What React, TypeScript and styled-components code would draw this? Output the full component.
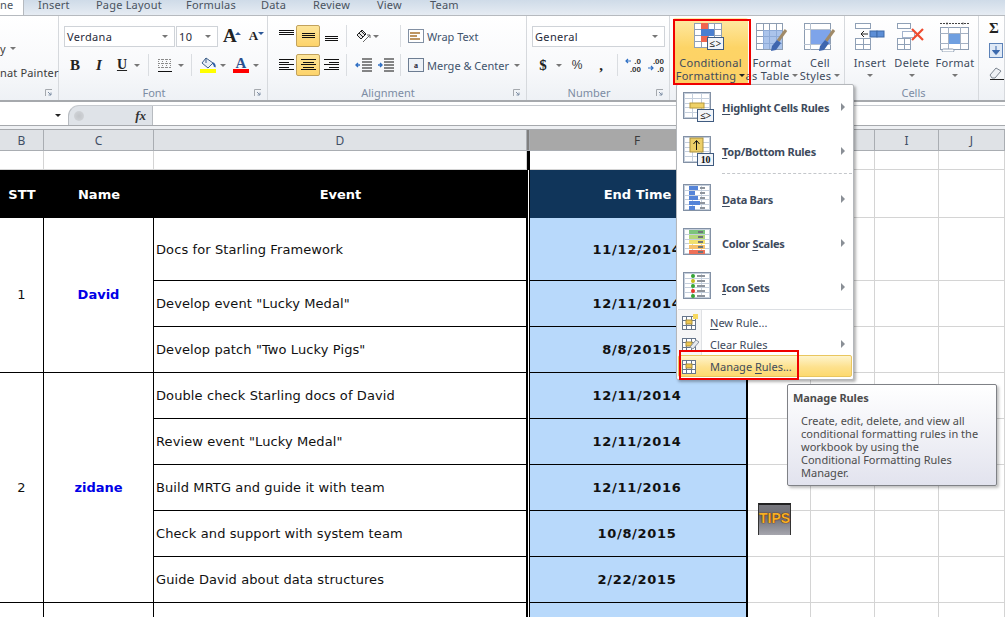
import React from "react";
import styled, { createGlobalStyle } from "styled-components";

const Global = createGlobalStyle`
  html, body { margin: 0; padding: 0; background: #fff; overflow: hidden; }
  * { box-sizing: border-box; }
`;

const uiFont = `"Noto Sans", "Open Sans", sans-serif`;
const sheetFont = `"DejaVu Sans", Verdana, sans-serif`;

const Page = styled.div`
  position: relative;
  width: 1005px;
  height: 617px;
  overflow: hidden;
  font-family: ${uiFont};
  font-size: 11px;
  color: #3b3b3b;
`;

/* tabs */
const TabBar = styled.div`
  display: flex;
  height: 16px;
  background: linear-gradient(#cfdbe8, #e6ecf3);
  border-bottom: 1px solid #b6babf;
  overflow: hidden;
`;
const Tab = styled.div<{ $w: number; $m?: number }>`
  width: ${(p) => p.$w}px;
  margin-left: ${(p) => p.$m ?? 0}px;
  flex: none;
  height: 15px;
  line-height: 9px;
  color: #4a5360;
  letter-spacing: 0.2px;
  white-space: nowrap;
`;
const ActiveTab = styled(Tab)`
  height: 16px;
  background: #fff;
  border-right: 1px solid #b6babf;
  text-align: right;
  padding-right: 14px;
`;

/* ribbon */
const Ribbon = styled.div`
  display: flex;
  height: 86px;
  background: linear-gradient(#fff 0%, #f8f9fb 60%, #eef1f5 100%);
  border-bottom: 2px solid #a6a9ad;
`;
const Group = styled.div<{ $w: number; $pad?: number; $top?: number }>`
  width: ${(p) => p.$w}px;
  flex: none;
  display: flex;
  flex-direction: column;
  padding: ${(p) => p.$top ?? 9}px 0 0 ${(p) => p.$pad ?? 0}px;
  border-right: 1px solid #d6d9dd;
`;
const Rows = styled.div`
  display: flex;
  flex-direction: column;
  gap: 7px;
`;
const Row = styled.div`
  display: flex;
  align-items: center;
  height: 22px;
`;
const Footer = styled.div<{ $pad?: number }>`
  margin: auto 0 0 ${(p) => -(p.$pad ?? 0)}px;
  height: 14px;
  display: grid;
  grid-template-columns: 1fr auto 1fr;
  align-items: center;
  color: #7c8ca3;
  line-height: 12px;
  font-size: 11px;
`;
const FooterLabel = styled.span<{ $shift?: number }>`
  grid-column: 2;
  margin-right: ${(p) => p.$shift ?? 0}px;
`;
const Launcher = styled.svg`
  grid-column: 3;
  justify-self: end;
  margin-right: 5px;
`;
const Combo = styled.div<{ $w: number }>`
  width: ${(p) => p.$w}px;
  height: 21px;
  background: #fff;
  border: 1px solid #cfd3d8;
  margin-right: 1px;
  display: flex;
  align-items: center;
  justify-content: space-between;
  padding: 0 6px 0 2px;
  color: #1f2a3a;
  font-size: 11px;
  letter-spacing: 0.35px;
`;
const Caret = styled.i<{ $m?: number; $dark?: boolean }>`
  display: inline-block;
  flex: none;
  width: 0;
  height: 0;
  margin-left: ${(p) => p.$m ?? 0}px;
  border-left: 3px solid transparent;
  border-right: 3px solid transparent;
  border-top: 3px solid ${(p) => (p.$dark ? "#222" : "#767676")};
`;
const Slot = styled.span<{ $w: number; $active?: boolean }>`
  display: inline-flex;
  flex: none;
  align-items: center;
  justify-content: center;
  width: ${(p) => p.$w}px;
  height: 22px;
  border-radius: 2px;
  ${(p) => p.$active && `background:linear-gradient(#fde59a,#fdd36a);border:1px solid #c2a25c;`}
`;
const Sep = styled.span<{ $l: number; $r: number }>`
  flex: none;
  width: 1px;
  height: 22px;
  margin: 0 ${(p) => p.$r - 1}px 0 ${(p) => p.$l}px;
  background: #dadde1;
`;
const Glyph = styled.span<{ $s?: string }>`
  font: bold 15px "Liberation Serif", serif;
  color: #222;
  ${(p) => p.$s}
`;
const TextBtn = styled.span`
  margin-left: 3px;
  color: #41536c;
  white-space: nowrap;
`;
const Clipped = styled.div`
  display: flex;
  flex-direction: column;
  height: 55px;
  white-space: nowrap;
`;
const PainterCaret = styled.div`
  display: flex;
  align-items: center;
  height: 32px;
  padding-top: 15px;
  gap: 4px;
`;
const Painter = styled.span`
  margin-top: 9px;
  letter-spacing: 0.15px;
  text-align: right;
  padding-right: 7px;
`;
const EditIcon = styled.svg<{ $mt: number }>`
  display: block;
  flex: none;
  margin-top: ${(p) => p.$mt}px;
`;

const BigRow = styled.div`
  display: flex;
`;
const BigBtn = styled.div<{ $w: number; $hot?: boolean }>`
  width: ${(p) => p.$w}px;
  height: 66px;
  flex: none;
  display: flex;
  flex-direction: column;
  align-items: center;
  padding-top: 4px;
  white-space: nowrap;
  line-height: 13px;
  letter-spacing: 0.3px;
  color: #3d4a5c;
  border-radius: 2px;
  ${(p) => p.$hot && `background:linear-gradient(#fee9a5,#fdd466 45%,#fdd066);`}
`;
const BigIconBox = styled.div<{ $left?: number }>`
  height: 34px;
  display: flex;
  align-items: flex-start;
  margin-right: ${(p) => p.$left ?? 0}px;
`;
const BigLine = styled.span`
  display: flex;
  align-items: center;
  height: 13px;
`;

/* formula bar */
const FormulaBar = styled.div`
  display: flex;
  height: 24px;
  padding-top: 3px;
  background: #fff;
  border-bottom: 1px solid #a6a9ad;
`;
const NameBox = styled.div`
  width: 68px;
  display: flex;
  justify-content: flex-end;
  align-items: center;
  padding-right: 7px;
`;
const FxBox = styled.div`
  width: 85px;
  background: #dfe3e8;
  border-radius: 11px 0 0 0;
  border-left: 1px solid #b7bbc0;
  border-top: 1px solid #c6cacf;
  border-right: 1px solid #b7bbc0;
  display: flex;
  align-items: center;
  justify-content: space-between;
  padding: 0 6px 0 5px;
`;
const Knob = styled.span`
  width: 10px;
  height: 10px;
  border-radius: 50%;
  background: radial-gradient(#c2c5c9, #d4d7db);
`;
const Fx = styled.span`
  font: italic bold 13px "Liberation Serif", serif;
  color: #333;
`;
const Input = styled.div`
  flex: 1;
  border-top: 1px solid #c6cacf;
`;
const Gutter = styled.div`
  height: 4px;
  background: #eef0f3;
  border-bottom: 1px solid #a6a9ad;
`;

/* sheet */
const columns = "44px 110px 373px 3px 218px 63px 64px 64px 66px";

const HeaderRow = styled.div`
  display: grid;
  grid-template-columns: ${columns};
  height: 21px;
`;
const ColHead = styled.div<{ $sel?: boolean; $edge?: boolean }>`
  background: ${(p) => (p.$edge ? "#7f7f7f" : p.$sel ? "#a8a8a8" : "#dfe2e6")};
  border-right: 1px solid ${(p) => (p.$sel ? "#8d8d8d" : "#a9adb2")};
  border-bottom: 1px solid #a9adb2;
  display: flex;
  align-items: center;
  justify-content: center;
  padding-right: ${(p) => (p.$sel ? 3 : 0)}px;
  color: ${(p) => (p.$sel ? "#3b3b3b" : "#3f4f65")};
  font-size: 12px;
`;
const Sheet = styled.div`
  position: relative;
  display: grid;
  grid-template-columns: ${columns};
  grid-template-rows: 19px 48px 63px repeat(8, 46px) 46px;
  font-family: ${sheetFont};
  font-size: 13px;
  color: #111;
`;
const Blank = styled.div`
  border-right: 1px solid #d4d4d4;
  border-bottom: 1px solid #d4d4d4;
`;
const DoubleRule = styled.div<{ $solid?: boolean }>`
  background: ${(p) => (p.$solid ? "#000" : "#fff")};
  border-left: 1px solid #000;
  border-right: 1px solid #000;
`;
const HeadCell = styled.div<{ $navy?: boolean }>`
  background: ${(p) => (p.$navy ? "#10355a" : "#000")};
  color: #fff;
  font-weight: bold;
  display: flex;
  align-items: center;
  justify-content: center;
  padding-right: ${(p) => (p.$navy ? 3 : 0)}px;
  font-size: 13px;
`;
const Merged = styled.div<{ $span: number; $blue?: boolean }>`
  grid-row: span ${(p) => p.$span};
  border-right: 1px solid #000;
  border-bottom: 1px solid #000;
  display: flex;
  align-items: center;
  justify-content: center;
  padding-bottom: 1px;
  ${(p) => p.$blue && `color:#0000e6;font-weight:bold;`}
`;
const EventCell = styled.div`
  border-right: 1px solid #000;
  border-bottom: 1px solid #000;
  display: flex;
  align-items: center;
  padding-left: 2px;
  white-space: nowrap;
  overflow: hidden;
  letter-spacing: 0.1px;
`;
const EndCell = styled.div`
  background: #b8d9fb;
  border-right: 2px solid #000;
  border-bottom: 1px solid #000;
  display: flex;
  align-items: center;
  justify-content: center;
  padding-right: 2px;
  font-weight: bold;
  letter-spacing: 0.7px;
`;
const Tips = styled.div`
  position: absolute;
  left: 758px;
  top: 352px;
  width: 33px;
  height: 32px;
  border: 1px solid #333;
  border-top: 2px solid #222;
  border-bottom: 0;
  background: linear-gradient(#77777d, #6e6e75 40%, #a6a6ae);
  display: flex;
  align-items: center;
  justify-content: center;
  font: bold 14px "Liberation Sans", sans-serif;
  color: #f6b027;
  text-shadow: 0 0 1px #5a1f00, 0 0 1px #5a1f00;
  padding-bottom: 5px;
`;

/* menu */
const Menu = styled.div`
  position: absolute;
  left: 676px;
  top: 84px;
  width: 178px;
  height: 296px;
  background: #fff;
  border: 1px solid #b4b7bb;
  border-radius: 2px;
  box-shadow: 2px 2px 3px rgba(0, 0, 0, 0.3);
  z-index: 5;
`;
const BigItem = styled.div`
  display: flex;
  align-items: center;
  height: 44px;
  padding: 0 8px 0 6px;
  font-weight: bold;
  color: #3d4a5c;
  letter-spacing: -0.25px;
  font-size: 11px;
`;
const ItemIcon = styled.div`
  width: 39px;
  flex: none;
  display: flex;
`;
const ItemArrow = styled.i`
  margin-left: auto;
  width: 0;
  height: 0;
  border-top: 4px solid transparent;
  border-bottom: 4px solid transparent;
  border-left: 4px solid #8a8f96;
`;
const Dashed = styled.div`
  margin: 0 1px 3px 45px;
  border-top: 1px dashed #c4c7cb;
`;
const SmallDivider = styled.div`
  margin: 0 1px;
  border-top: 1px solid #dcdfe3;
`;
const SmallList = styled.div`
  display: flex;
  flex-direction: column;
  background: linear-gradient(90deg, #f6f6f7 24px, #dfe1e4 24px, #dfe1e4 25px, #fff 25px);
  padding-top: 1px;
`;
const SmallItem = styled.div<{ $hot?: boolean }>`
  display: flex;
  align-items: center;
  height: 22px;
  padding: 0 8px 0 4px;
  color: #3d4a5c;
  ${(p) =>
    p.$hot &&
    `background:linear-gradient(#fef4cc,#fde18e 55%,#fdd96f);border:1px solid #e9c65f;border-radius:2px;margin:0 1px;padding:0 7px 0 2px;`}
`;
const SmallIcon = styled.div`
  width: 29px;
  flex: none;
  display: flex;
`;
const Key = styled.u`
  text-underline-offset: 2px;
`;
const RedBox = styled.div<{ $x: number; $y: number; $w: number; $h: number }>`
  position: absolute;
  left: ${(p) => p.$x}px;
  top: ${(p) => p.$y}px;
  width: ${(p) => p.$w}px;
  height: ${(p) => p.$h}px;
  border: 2px solid #f00000;
  z-index: 7;
  pointer-events: none;
`;
const Tooltip = styled.div`
  position: absolute;
  left: 787px;
  top: 384px;
  width: 210px;
  height: 102px;
  padding: 6px 6px 0 5px;
  background: linear-gradient(#fff, #e2e3ee);
  border: 1px solid #7f8186;
  border-radius: 2px;
  box-shadow: 2px 2px 3px rgba(0, 0, 0, 0.25);
  color: #4c4c4c;
  z-index: 6;
`;
const TipTitle = styled.div`
  font-weight: bold;
  line-height: 14px;
  letter-spacing: -0.1px;
`;
const TipBody = styled.div`
  margin: 9px 0 0 8px;
  line-height: 13px;
`;

/* icons */
const Lines = ({ rows }: { rows: [number, number, number][] }) => (
  <svg width="15" height="12" viewBox="0 0 15 12">
    {rows.map(([x, y, w], i) => (
      <rect key={i} x={x} y={y} width={w} height="1" fill="#111" />
    ))}
  </svg>
);
const top3: [number, number, number][] = [[0, 0, 15], [0, 2, 15], [0, 4, 15]];
const mid3: [number, number, number][] = [[1, 3, 13], [1, 5, 13], [1, 7, 13]];
const bot3: [number, number, number][] = [[1, 6, 13], [1, 8, 13], [1, 10, 13]];
const leftLines: [number, number, number][] = [[0, 0, 15], [0, 3, 10], [0, 5, 15], [0, 8, 10], [0, 10, 15]];
const centerLines: [number, number, number][] = [[0, 0, 15], [2, 3, 11], [0, 5, 15], [2, 8, 11], [0, 10, 15]];
const rightLines: [number, number, number][] = [[0, 0, 15], [5, 3, 10], [0, 5, 15], [5, 8, 10], [0, 10, 15]];

const Launch = () => (
  <Launcher width="8" height="8" viewBox="0 0 8 8">
    <path d="M.5 7V.5H7" fill="none" stroke="#a5a9ae" />
    <path d="M3 3l3 3M6 3.5V6H3.5" fill="none" stroke="#7f8fa5" />
  </Launcher>
);
const Grid = ({ x, y, w, h, cols, rows, c = "#8fa0b6" }: { x: number; y: number; w: number; h: number; cols: number; rows: number; c?: string }) => (
  <g stroke={c} strokeWidth="1" fill="none">
    <rect x={x + 0.5} y={y + 0.5} width={w - 1} height={h - 1} fill="#fff" />
    {Array.from({ length: cols - 1 }, (_, i) => (
      <path key={"c" + i} d={`M${Math.round(x + ((i + 1) * (w - 1)) / cols) + 0.5} ${y}v${h}`} />
    ))}
    {Array.from({ length: rows - 1 }, (_, i) => (
      <path key={"r" + i} d={`M${x} ${Math.round(y + ((i + 1) * (h - 1)) / rows) + 0.5}h${w}`} />
    ))}
  </g>
);
const MiniDoc = ({ x, y, children, w = 16, h = 12 }: { x: number; y: number; w?: number; h?: number; children: React.ReactNode }) => (
  <g>
    <rect x={x + 0.5} y={y + 0.5} width={w} height={h} fill="#f2f5f9" stroke="#3f5b80" />
    <text x={x + w / 2 + 0.5} y={y + h - 2} textAnchor="middle" fontFamily="Liberation Serif, serif" fontWeight="bold" fontSize="10" fill="#111">
      {children}
    </text>
  </g>
);
const Brush = ({ dx = 0 }: { dx?: number }) => (
  <g transform={`translate(${dx} 0)`}>
    <path d="M30 8L22 19" stroke="#a08a68" strokeWidth="3" />
    <path d="M21 18l4 3-5 7-5 1 1-5z" fill="#3f66ae" />
  </g>
);

const CondIcon = () => (
  <svg width="32" height="30" viewBox="0 0 32 30">
    <Grid x={1} y={1} w={28} h={25} cols={4} rows={4} />
    <rect x="8" y="1" width="7" height="6" fill="#f0664f" />
    <rect x="8" y="7" width="13" height="7" fill="#4a7fd0" />
    <rect x="8" y="14" width="7" height="6" fill="#f0664f" />
    <MiniDoc x={14} y={15}>≤&gt;</MiniDoc>
  </svg>
);
const TableIcon = () => (
  <svg width="34" height="30" viewBox="0 0 34 30">
    <Grid x={1} y={1} w={27} h={27} cols={4} rows={4} c="#8d9db2" />
    <rect x="8" y="8" width="19" height="19" fill="#8fb0e4" opacity="0.75" />
    <Brush dx={1} />
  </svg>
);
const StylesIcon = () => (
  <svg width="34" height="30" viewBox="0 0 34 30">
    <rect x="1.5" y="1.5" width="26" height="26" fill="#fff" stroke="#8d9db2" />
    <path d="M7.5 1v27M1 7.5h27M1 22.5h27" stroke="#b5c0cf" />
    <rect x="8" y="8" width="19" height="14" fill="#7ea4ea" />
    <Brush dx={1} />
  </svg>
);
const InsertIcon = () => (
  <svg width="32" height="30" viewBox="0 0 32 30">
    <Grid x={1} y={1} w={16} h={6} cols={1} rows={1} />
    <Grid x={1} y={16} w={16} h={12} cols={2} rows={2} />
    <rect x="16" y="9" width="7" height="6" fill="#5c8ed6" stroke="#3f6aa8" />
    <rect x="23" y="9" width="7" height="6" fill="#5c8ed6" stroke="#3f6aa8" />
    <path d="M14 12H7m3-3l-3 3 3 3" fill="none" stroke="#222" />
  </svg>
);
const DeleteIcon = () => (
  <svg width="32" height="30" viewBox="0 0 32 30">
    <Grid x={1} y={1} w={14} h={6} cols={1} rows={1} />
    <Grid x={1} y={16} w={14} h={12} cols={2} rows={2} />
    <rect x="6.5" y="9.5" width="12" height="6" fill="#fff" stroke="#4a6a9a" strokeDasharray="1 1" />
    <path d="M16 7l11 11M27 7L16 18" stroke="#ef4b2f" strokeWidth="2.2" />
  </svg>
);
const FormatIcon = () => (
  <svg width="32" height="30" viewBox="0 0 32 30">
    <path d="M1 1.5h30M8 .5v2M24 .5v2" stroke="#444" strokeDasharray="2 1" />
    <rect x="1.5" y="5.5" width="28" height="22" fill="#fff" stroke="#8d9db2" />
    <path d="M9.5 5v22M21.5 5v22M1 11.5h28M1 21.5h28" stroke="#a5b2c4" />
    <rect x="10" y="12" width="11" height="10" fill="#6f9fe0" />
    <rect x="3" y="27" width="12" height="3" rx="1.5" fill="#fff" stroke="#8d9db2" />
  </svg>
);
const FillIcon = () => (
  <svg width="16" height="18" viewBox="0 0 16 18">
    <path d="M6 2l7 5-5 5-6-5z" fill="#e8eef6" stroke="#40608a" />
    <path d="M6 2v5" stroke="#40608a" />
    <path d="M13 7c2 2 2 3 1.500 4" stroke="#2f5fa8" strokeWidth="2" fill="none" />
    <rect x="0" y="13" width="16" height="4" fill="#ff0" />
  </svg>
);
const FontColorIcon = () => (
  <svg width="16" height="18" viewBox="0 0 16 18">
    <text x="8" y="12" textAnchor="middle" fontFamily="Liberation Serif, serif" fontWeight="bold" fontSize="15" fill="#2b4f8f">A</text>
    <rect x="0" y="13" width="16" height="4" fill="#f00" />
  </svg>
);
const BorderIcon = () => (
  <svg width="14" height="15" viewBox="0 0 14 15">
    <path d="M.5 1v10M4.500 1v10M8.500 1v10M12.500 1v10M1 1.500h12M1 5.500h12M1 9.500h12" stroke="#8a8a8a" strokeDasharray="1 1" />
    <path d="M0 13.500h14" stroke="#111" />
  </svg>
);
const OrientationIcon = () => (
  <svg width="16" height="16" viewBox="0 0 16 16">
    <path d="M1 7l5-5 4 4-5 5z" fill="#e5e5e5" stroke="#222" />
    <path d="M3 5l4 4M5 3l4 4" stroke="#222" />
    <path d="M7 14l7-7m-3 0h3v3" fill="none" stroke="#666" />
  </svg>
);
const IndentIcon = ({ flip }: { flip?: boolean }) => (
  <svg width="17" height="14" viewBox="0 0 17 14">
    <path d="M7 1h10M7 4h10M7 7h10M7 10h10M7 13h10" stroke="#111" />
    <path d={flip ? "M1 7h4m-2-2l2 2-2 2" : "M5 7H1m2-2L1 7l2 2"} stroke="#2f6fc4" strokeWidth="1.4" fill="none" />
  </svg>
);
const WrapIcon = () => (
  <svg width="16" height="16" viewBox="0 0 16 16">
    <rect x=".5" y="1.5" width="15" height="13" fill="#fff" stroke="#8290a3" />
    <path d="M2 5h10M2 8h7M2 11h10" stroke="#a9742f" strokeWidth="1.4" />
  </svg>
);
const MergeIcon = () => (
  <svg width="16" height="16" viewBox="0 0 16 16">
    <rect x=".5" y="1.5" width="15" height="13" fill="#eef2f7" stroke="#6d7d92" />
    <text x="8" y="11" textAnchor="middle" fontSize="8" fontFamily="Liberation Serif, serif" fontWeight="bold" fill="#223">a</text>
  </svg>
);
const DecimalIcon = ({ top, bottom, flip }: { top: string; bottom: string; flip?: boolean }) => (
  <svg width="16" height="16" viewBox="0 0 16 16">
    <text x="16" y="7" textAnchor="end" fontSize="8" fontFamily="Liberation Sans, sans-serif" fontWeight="bold" fill="#333">{top}</text>
    <text x="16" y="15" textAnchor="end" fontSize="8" fontFamily="Liberation Sans, sans-serif" fontWeight="bold" fill="#333">{bottom}</text>
    <path d={flip ? "M0 11h5m-2-2l2 2-2 2" : "M6 4H1m2-2L1 4l2 2"} stroke="#2f6fc4" strokeWidth="1.2" fill="none" />
  </svg>
);
const MenuFrame = ({ children }: { children: React.ReactNode }) => (
  <svg width="31" height="30" viewBox="0 0 31 30">
    <rect x=".5" y=".5" width="27" height="26" fill="url(#frame)" stroke="#8391a5" />
    {children}
  </svg>
);
const Highlight = () => (
  <MenuFrame>
    <Grid x={1} y={1} w={26} h={25} cols={3} rows={5} c="#c5cfdc" />
    <rect x="7" y="11" width="14" height="5" fill="#efd166" stroke="#b89a3c" />
    <MiniDoc x={14} y={17}>≤&gt;</MiniDoc>
  </MenuFrame>
);
const TopBottom = () => (
  <MenuFrame>
    <Grid x={1} y={1} w={26} h={25} cols={3} rows={5} c="#c5cfdc" />
    <rect x="7" y="2" width="13" height="14" fill="#edcf68" stroke="#a98f3c" />
    <path d="M13.500 14V5m-3 3l3-3.500 3 3.500" stroke="#111" fill="none" />
    <MiniDoc x={14} y={17}>10</MiniDoc>
  </MenuFrame>
);
const DataBars = () => (
  <MenuFrame>
    <Grid x={1} y={1} w={26} h={25} cols={3} rows={5} c="#c5cfdc" />
    {[9, 6, 9, 11, 6].map((w, i) => (
      <g key={i}>
        <rect x={6} y={2 + i * 5} width={w} height={4} fill="#5584d8" />
        <rect x={17} y={3 + i * 5} width={5} height={2} fill="#8e949c" />
      </g>
    ))}
  </MenuFrame>
);
const ColorScales = () => (
  <MenuFrame>
    <Grid x={1} y={1} w={26} h={25} cols={3} rows={5} c="#c5cfdc" />
    {["#7cc47c", "#b5d77c", "#f1e070", "#f6c06c", "#ee7058"].map((c, i) => (
      <g key={c}>
        <rect x={6} y={2 + i * 5} width={16} height={4} fill={c} />
        <rect x={15} y={3 + i * 5} width={5} height={2} fill="#6f7478" />
      </g>
    ))}
  </MenuFrame>
);
const IconSets = () => (
  <MenuFrame>
    <Grid x={1} y={1} w={26} h={25} cols={3} rows={5} c="#c5cfdc" />
    {["#36a535", "#c9bf1d", "#36a535", "#e8362a", "#36a535"].map((c, i) => (
      <g key={i}>
        <circle cx={10} cy={4 + i * 5} r={2} fill={c} />
        <rect x={14} y={3 + i * 5} width={8} height={2} fill="#8e949c" />
      </g>
    ))}
  </MenuFrame>
);
const SmallGrid = ({ children }: { children?: React.ReactNode }) => (
  <svg width="18" height="18" viewBox="0 0 18 18">
    <Grid x={1} y={3} w={14} h={14} cols={3} rows={3} c="#66758a" />
    <rect x="5" y="7" width="6" height="4" fill="#f0c850" stroke="#a98f3c" />
    {children}
  </svg>
);

type Entry = { title: string; end: string };
const people: { stt: string; name: string; entries: Entry[] }[] = [
  {
    stt: "1",
    name: "David",
    entries: [
      { title: "Docs for Starling Framework", end: "11/12/2014" },
      { title: 'Develop event "Lucky Medal"', end: "12/11/2014" },
      { title: 'Develop patch "Two Lucky Pigs"', end: "8/8/2015" },
    ],
  },
  {
    stt: "2",
    name: "zidane",
    entries: [
      { title: "Double check Starling docs of David", end: "12/11/2014" },
      { title: 'Review event "Lucky Medal"', end: "12/11/2014" },
      { title: "Build MRTG and guide it with team", end: "12/11/2016" },
      { title: "Check and support with system team", end: "10/8/2015" },
      { title: "Guide David about data structures", end: "2/22/2015" },
    ],
  },
];

const FreeCells = () => (
  <>
    <Blank />
    <Blank />
    <Blank />
    <Blank />
  </>
);

export default function App() {
  return (
    <Page>
      <Global />
      <svg width="0" height="0" style={{ position: "absolute" }}>
        <defs>
          <linearGradient id="frame" x1="0" y1="0" x2="1" y2="1">
            <stop offset="0" stopColor="#fff" />
            <stop offset="1" stopColor="#d6dfeb" />
          </linearGradient>
        </defs>
      </svg>

      <TabBar>
        <ActiveTab $w={24}>ne</ActiveTab>
        <Tab $w={58} $m={14}>Insert</Tab>
        <Tab $w={90}>Page Layout</Tab>
        <Tab $w={75}>Formulas</Tab>
        <Tab $w={52}>Data</Tab>
        <Tab $w={64}>Review</Tab>
        <Tab $w={53}>View</Tab>
        <Tab $w={40}>Team</Tab>
      </TabBar>

      <Ribbon>
        <Group $w={59}>
          <Clipped>
            <PainterCaret>
              <span>y</span>
              <Caret />
            </PainterCaret>
            <Painter>nat Painter</Painter>
          </Clipped>
          <Footer>
            <Launch />
          </Footer>
        </Group>

        <Group $w={209} $pad={5}>
          <Rows>
            <Row>
              <Combo $w={111}>
                Verdana <Caret />
              </Combo>
              <Combo $w={42}>
                10 <Caret />
              </Combo>
              <Slot $w={4} />
              <Glyph $s="font-size:19px;">A</Glyph>
              <svg width="7" height="14" viewBox="0 0 7 14" style={{ marginLeft: -2 }}>
                <path d="M0 6l3-3 3 3z" fill="#2b5797" />
              </svg>
              <Slot $w={7} />
              <Glyph $s="font-size:13px;">A</Glyph>
              <svg width="7" height="14" viewBox="0 0 7 14">
                <path d="M0 3l3 3 3-3z" fill="#2b5797" />
              </svg>
            </Row>
            <Row>
              <Slot $w={22}>
                <Glyph>B</Glyph>
              </Slot>
              <Slot $w={26}>
                <Glyph $s="font-style:italic;">I</Glyph>
              </Slot>
              <Slot $w={20}>
                <Glyph $s="text-decoration:underline;font-size:14px;">U</Glyph>
              </Slot>
              <Caret $m={2} />
              <Sep $l={8} $r={10} />
              <BorderIcon />
              <Caret $m={6} />
              <Sep $l={7} $r={9} />
              <FillIcon />
              <Caret $m={4} />
              <Slot $w={7} />
              <FontColorIcon />
              <Caret $m={4} />
            </Row>
          </Rows>
          <Footer $pad={5}>
            <FooterLabel $shift={18}>Font</FooterLabel>
            <Launch />
          </Footer>
        </Group>

        <Group $w={259} $pad={8}>
          <Rows>
            <Row>
              <Slot $w={20}>
                <Lines rows={top3} />
              </Slot>
              <Slot $w={24} $active>
                <Lines rows={mid3} />
              </Slot>
              <Slot $w={22}>
                <Lines rows={bot3} />
              </Slot>
              <Sep $l={4} $r={10} />
              <OrientationIcon />
              <Caret $m={1} />
              <Sep $l={21} $r={8} />
              <WrapIcon />
              <TextBtn>Wrap Text</TextBtn>
            </Row>
            <Row>
              <Slot $w={20}>
                <Lines rows={leftLines} />
              </Slot>
              <Slot $w={24} $active>
                <Lines rows={centerLines} />
              </Slot>
              <Slot $w={22}>
                <Lines rows={rightLines} />
              </Slot>
              <Sep $l={4} $r={9} />
              <IndentIcon />
              <Slot $w={5} />
              <IndentIcon flip />
              <Sep $l={6} $r={8} />
              <MergeIcon />
              <TextBtn>Merge &amp; Center</TextBtn>
              <Caret $m={5} />
            </Row>
          </Rows>
          <Footer $pad={8}>
            <FooterLabel $shift={18}>Alignment</FooterLabel>
            <Launch />
          </Footer>
        </Group>

        <Group $w={143} $pad={5}>
          <Rows>
            <Row>
              <Combo $w={133}>
                General <Caret />
              </Combo>
            </Row>
            <Row>
              <Slot $w={4} />
              <Slot $w={14}>
                <Glyph>$</Glyph>
              </Slot>
              <Caret $m={6} />
              <Slot $w={30}>
                <Glyph $s="font:12px 'Liberation Sans',sans-serif;color:#333;">%</Glyph>
              </Slot>
              <Slot $w={18}>
                <Glyph>,</Glyph>
              </Slot>
              <Sep $l={7} $r={8} />
              <DecimalIcon top=".0" bottom=".00" />
              <Slot $w={7} />
              <DecimalIcon top=".00" bottom=".0" flip />
            </Row>
          </Rows>
          <Footer $pad={5}>
            <FooterLabel $shift={18}>Number</FooterLabel>
            <Launch />
          </Footer>
        </Group>

        <Group $w={175} $pad={3} $top={2}>
          <BigRow>
            <BigBtn $w={75} $hot>
              <BigIconBox $left={3}>
                <CondIcon />
              </BigIconBox>
              <BigLine>Conditional</BigLine>
              <BigLine>
                Formatting
                <Caret $m={3} $dark />
              </BigLine>
            </BigBtn>
            <BigBtn $w={48}>
              <BigIconBox>
                <TableIcon />
              </BigIconBox>
              <BigLine>Format</BigLine>
              <BigLine>
                as Table
                <Caret $m={3} />
              </BigLine>
            </BigBtn>
            <BigBtn $w={48}>
              <BigIconBox>
                <StylesIcon />
              </BigIconBox>
              <BigLine>Cell</BigLine>
              <BigLine>
                Styles
                <Caret $m={3} />
              </BigLine>
            </BigBtn>
          </BigRow>
        </Group>

        <Group $w={134} $pad={4} $top={2}>
          <BigRow>
            <BigBtn $w={42}>
              <BigIconBox>
                <InsertIcon />
              </BigIconBox>
              <BigLine>Insert</BigLine>
              <BigLine>
                <Caret />
              </BigLine>
            </BigBtn>
            <BigBtn $w={42}>
              <BigIconBox>
                <DeleteIcon />
              </BigIconBox>
              <BigLine>Delete</BigLine>
              <BigLine>
                <Caret />
              </BigLine>
            </BigBtn>
            <BigBtn $w={44}>
              <BigIconBox>
                <FormatIcon />
              </BigIconBox>
              <BigLine>Format</BigLine>
              <BigLine>
                <Caret />
              </BigLine>
            </BigBtn>
          </BigRow>
          <Footer $pad={0}>
            <FooterLabel>Cells</FooterLabel>
          </Footer>
        </Group>

        <Group $w={26} $pad={10} $top={2}>
          <Glyph $s="font-size:15px;line-height:20px;height:20px;">Σ</Glyph>
          <EditIcon $mt={5} width="14" height="15" viewBox="0 0 14 15">
            <rect x=".5" y=".5" width="13" height="14" fill="#dfe9f6" stroke="#5c82b8" />
            <path d="M7 3v5M3.500 7.500L7 11.500l3.500-4z" fill="#3a68ad" stroke="#3a68ad" />
          </EditIcon>
          <EditIcon $mt={9} width="15" height="14" viewBox="0 0 15 14">
            <path d="M1 8l6-7 5 3-6 7H3z" fill="#eef1f5" stroke="#7c8590" />
            <path d="M1 12.500h14" stroke="#222" />
          </EditIcon>
        </Group>
      </Ribbon>

      <FormulaBar>
        <NameBox>
          <Caret $dark />
        </NameBox>
        <FxBox>
          <Knob />
          <Fx>fx</Fx>
        </FxBox>
        <Input />
      </FormulaBar>
      <Gutter />

      <HeaderRow>
        <ColHead>B</ColHead>
        <ColHead>C</ColHead>
        <ColHead>D</ColHead>
        <ColHead $edge />
        <ColHead $sel>F</ColHead>
        <ColHead />
        <ColHead />
        <ColHead>I</ColHead>
        <ColHead>J</ColHead>
      </HeaderRow>

      <Sheet>
        <Blank />
        <Blank />
        <Blank />
        <DoubleRule $solid />
        <Blank />
        <FreeCells />

        <HeadCell>STT</HeadCell>
        <HeadCell>Name</HeadCell>
        <HeadCell>Event</HeadCell>
        <DoubleRule />
        <HeadCell $navy>End Time</HeadCell>
        <FreeCells />

        {people.map((p) =>
          p.entries.map((e, i) => (
            <React.Fragment key={p.stt + i}>
              {i === 0 && <Merged $span={p.entries.length}>{p.stt}</Merged>}
              {i === 0 && (
                <Merged $span={p.entries.length} $blue>
                  {p.name}
                </Merged>
              )}
              <EventCell>{e.title}</EventCell>
              <DoubleRule />
              <EndCell>{e.end}</EndCell>
              <FreeCells />
            </React.Fragment>
          ))
        )}

        <Merged $span={1} />
        <Merged $span={1} />
        <EventCell />
        <DoubleRule />
        <EndCell />
        <FreeCells />

        <Tips>TIPS</Tips>
      </Sheet>

      <RedBox $x={673} $y={19} $w={78} $h={66} />
      <RedBox $x={679} $y={350} $w={120} $h={30} />

      <Menu>
        <BigItem>
          <ItemIcon>
            <Highlight />
          </ItemIcon>
          <span>
            <Key>H</Key>ighlight Cells Rules
          </span>
          <ItemArrow />
        </BigItem>
        <BigItem>
          <ItemIcon>
            <TopBottom />
          </ItemIcon>
          <span>
            <Key>T</Key>op/Bottom Rules
          </span>
          <ItemArrow />
        </BigItem>
        <Dashed />
        <BigItem>
          <ItemIcon>
            <DataBars />
          </ItemIcon>
          <span>
            <Key>D</Key>ata Bars
          </span>
          <ItemArrow />
        </BigItem>
        <BigItem>
          <ItemIcon>
            <ColorScales />
          </ItemIcon>
          <span>
            Color <Key>S</Key>cales
          </span>
          <ItemArrow />
        </BigItem>
        <BigItem>
          <ItemIcon>
            <IconSets />
          </ItemIcon>
          <span>
            <Key>I</Key>con Sets
          </span>
          <ItemArrow />
        </BigItem>
        <SmallDivider />
        <SmallList>
          <SmallItem>
            <SmallIcon>
              <SmallGrid>
                <path d="M12 1h5v5h-5z" fill="#f6d860" />
              </SmallGrid>
            </SmallIcon>
            <span>
              <Key>N</Key>ew Rule...
            </span>
          </SmallItem>
          <SmallItem>
            <SmallIcon>
              <SmallGrid>
                <path d="M9 12l6-7 3 2-6 7z" fill="#e6e9ee" stroke="#8a93a0" />
              </SmallGrid>
            </SmallIcon>
            <span>
              <Key>C</Key>lear Rules
            </span>
            <ItemArrow />
          </SmallItem>
          <SmallItem $hot>
            <SmallIcon>
              <SmallGrid />
            </SmallIcon>
            <span>
              Manage <Key>R</Key>ules...
            </span>
          </SmallItem>
        </SmallList>
      </Menu>

      <Tooltip>
        <TipTitle>Manage Rules</TipTitle>
        <TipBody>
          Create, edit, delete, and view all
          <br />
          conditional formatting rules in the
          <br />
          workbook by using the
          <br />
          Conditional Formatting Rules
          <br />
          Manager.
        </TipBody>
      </Tooltip>
    </Page>
  );
}
